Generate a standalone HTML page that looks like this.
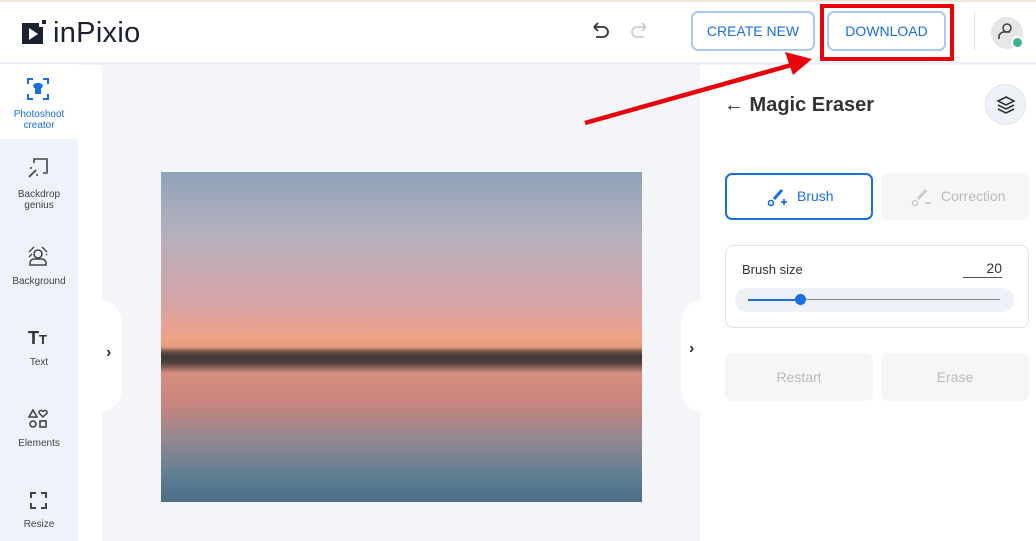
<!DOCTYPE html><html><head><style>
*{margin:0;padding:0;box-sizing:border-box}
body{width:1036px;height:541px;overflow:hidden;font-family:"Liberation Sans",sans-serif;background:#fff;position:relative}
.a{position:absolute}
.side{left:0;top:64px;width:78px;height:477px;background:#eef2fa}
.it{position:absolute;left:0;width:78px;text-align:center;font-size:10px;color:#444;line-height:11px}
.btn{position:absolute;border:2px solid #a9c9f5;border-radius:7px;color:#1a6fe0;font-size:14px;text-align:center;line-height:36px}
</style></head><body>
<div class="a" style="left:0;top:0;width:1036px;height:2px;background:#efe6d6"></div>
<div class="a" style="left:0;top:62px;width:1036px;height:3px;background:#eef2f8"></div>
<svg class="a" style="left:22px;top:20px" width="26" height="26" viewBox="0 0 26 26"><path d="M0 3h17v4h4v17H0z" fill="#1c2033"/><rect x="20" y="0" width="4" height="4" fill="#1c2033"/><path d="M7 8l9 6-9 6z" fill="#fff"/></svg>
<div class="a" style="left:53px;top:17px;font-size:29px;color:#1c2033;letter-spacing:0.3px">inPixio</div>
<svg class="a" style="left:590px;top:22px" width="60" height="18" viewBox="0 0 60 18"><path d="M4 5h9a5 5 0 010 10H6M4 5l4-4M4 5l4 4" stroke="#333" stroke-width="1.8" fill="none"/><path d="M56 5h-9a5 5 0 000 10h7M56 5l-4-4M56 5l-4 4" stroke="#ccc" stroke-width="1.8" fill="none"/></svg>
<div class="btn" style="left:691px;top:11px;width:124px;height:40px">CREATE NEW</div>
<div class="btn" style="left:827px;top:11px;width:119px;height:40px">DOWNLOAD</div>
<div class="a" style="left:820px;top:4px;width:134px;height:57px;border:4px solid #e8000b"></div>
<div class="a" style="left:974px;top:12px;width:1px;height:38px;background:#e3e3e3"></div>
<div class="a" style="left:991px;top:17px;width:32px;height:32px;border-radius:50%;background:#e6e6e6"></div>
<svg class="a" style="left:998px;top:23px" width="20" height="18" viewBox="0 0 20 18"><circle cx="9" cy="5" r="4" stroke="#444" stroke-width="1.6" fill="none"/><path d="M1 16v-2a5 5 0 015-5h6" stroke="#444" stroke-width="1.6" fill="none"/></svg>
<div class="a" style="left:1011px;top:36px;width:13px;height:13px;border-radius:50%;background:#3cb38e;border:2px solid #fff"></div>
<div class="a side"></div>
<div class="a" style="left:0;top:64px;width:78px;height:75px;background:#fff"></div>
<svg class="a" style="left:27px;top:78px" width="22" height="22" viewBox="0 0 22 22"><path d="M1 6V1h5M16 1h5v5M21 16v5h-5M6 21H1v-5" stroke="#1a6fe0" stroke-width="2" fill="none"/><path d="M6 7l3-2h4l3 2-1 3h-1v6H8v-6H7z" fill="#1a6fe0"/></svg>
<div class="it" style="top:109px;color:#1a6fe0">Photoshoot<br>creator</div>
<svg class="a" style="left:27px;top:157px" width="22" height="22" viewBox="0 0 22 22"><path d="M7 6V2h13v14h-4" stroke="#444" stroke-width="1.6" fill="none"/><path d="M2 20l7-7" stroke="#444" stroke-width="1.8"/><circle cx="4" cy="11" r="1" fill="#444"/><circle cx="10" cy="18" r="1" fill="#444"/></svg>
<div class="it" style="top:189px">Backdrop<br>genius</div>
<svg class="a" style="left:27px;top:245px" width="22" height="22" viewBox="0 0 22 22"><circle cx="11" cy="9" r="4" stroke="#444" stroke-width="1.6" fill="none"/><path d="M3 20v-2a4 4 0 014-4h8a4 4 0 014 4v2z" stroke="#444" stroke-width="1.6" fill="none"/><path d="M2 7l5-5M15 2l5 5M2 12l3-3M19 10l1-1" stroke="#444" stroke-width="1.4"/></svg>
<div class="it" style="top:276px">Background</div>
<div class="a" style="left:28px;top:328px;font-size:18px;font-weight:bold;color:#333">T<span style="font-size:13px">T</span></div>
<div class="it" style="top:357px">Text</div>
<svg class="a" style="left:28px;top:409px" width="20" height="20" viewBox="0 0 20 20"><path d="M5 1l4 7H1z" stroke="#444" stroke-width="1.6" fill="none"/><path d="M15 8l-4-4a2 2 0 014-1 2 2 0 014 1z" stroke="#444" stroke-width="1.5" fill="none"/><circle cx="5" cy="15" r="3" stroke="#444" stroke-width="1.6" fill="none"/><rect x="12" y="12" width="6" height="6" stroke="#444" stroke-width="1.6" fill="none"/></svg>
<div class="it" style="top:438px">Elements</div>
<div class="a" style="left:30px;top:492px;width:17px;height:17px;border:2px dashed #444"></div>
<div class="it" style="top:519px">Resize</div>
<div class="a" style="left:78px;top:65px;width:24px;height:476px;background:#fff"></div>
<div class="a" style="left:102px;top:65px;width:598px;height:476px;background:#f4f5f8"></div>
<div class="a" style="left:78px;top:300px;width:44px;height:112px;background:#fff;border-radius:0 22px 22px 0"></div>
<div class="a" style="left:681px;top:300px;width:40px;height:112px;background:#fff;border-radius:22px 0 0 22px"></div>
<div class="a" style="left:106px;top:344px;font-size:16px;color:#333;font-weight:bold">›</div>
<div class="a" style="left:689px;top:340px;font-size:16px;color:#333;font-weight:bold">›</div>
<div class="a" style="left:161px;top:172px;width:481px;height:330px;background:linear-gradient(180deg,#8fa4ba 0%,#b7b0bc 20%,#d6a3a5 40%,#f0a283 51%,#e59a80 53%,#6a5048 54.5%,#3f3634 56%,#5a4440 58%,#d58f7f 61%,#c8857d 70%,#8f8792 82%,#5f7f93 92%,#4b6e86 100%)"></div>
<div class="a" style="left:700px;top:65px;width:336px;height:476px;background:#fff"></div>
<div class="a" style="left:724px;top:94px;font-size:20px;font-weight:bold;color:#333">← Magic Eraser</div>
<div class="a" style="left:985px;top:84px;width:41px;height:41px;border-radius:50%;background:#eef1f8;border:1px solid #e2e4ea"></div>
<svg class="a" style="left:995px;top:94px" width="22" height="22" viewBox="0 0 22 22"><path d="M11 3l8 4-8 4-8-4z M3 11l8 4 8-4M3 15l8 4 8-4" stroke="#333" stroke-width="1.6" fill="none"/></svg>
<div class="a" style="left:725px;top:173px;width:148px;height:47px;border:2px solid #1a6fe0;border-radius:7px;color:#1a6fe0;font-size:14px;line-height:43px;padding-left:70px">Brush</div>
<svg class="a" style="left:766px;top:187px" width="22" height="20" viewBox="0 0 22 20"><path d="M8 12L16 3" stroke="#1a6fe0" stroke-width="3"/><circle cx="5" cy="16" r="2.5" stroke="#1a6fe0" stroke-width="1.6" fill="none"/><path d="M15 15h6M18 12v6" stroke="#1a6fe0" stroke-width="1.8"/></svg>
<div class="a" style="left:881px;top:173px;width:148px;height:47px;background:#f6f6f6;border-radius:7px;color:#bbb;font-size:14px;line-height:47px;padding-left:60px">Correction</div>
<svg class="a" style="left:910px;top:187px" width="22" height="20" viewBox="0 0 22 20"><path d="M8 12L16 3" stroke="#ccc" stroke-width="3"/><circle cx="5" cy="16" r="2.5" stroke="#ccc" stroke-width="1.6" fill="none"/><path d="M15 16h6" stroke="#ccc" stroke-width="1.8"/></svg>
<div class="a" style="left:725px;top:245px;width:304px;height:83px;border:1px solid #e2e4e8;border-radius:8px"></div>
<div class="a" style="left:742px;top:262px;font-size:13px;color:#333">Brush size</div>
<div class="a" style="left:963px;top:260px;width:39px;text-align:right;font-size:14px;color:#333;border-bottom:1px solid #555;padding-bottom:1px">20</div>
<div class="a" style="left:735px;top:288px;width:279px;height:24px;background:#eef1f7;border-radius:12px"></div>
<div class="a" style="left:748px;top:299px;width:53px;height:2px;background:#1a6fe0"></div>
<div class="a" style="left:801px;top:299px;width:199px;height:1px;background:#888"></div>
<div class="a" style="left:795px;top:294px;width:11px;height:11px;border-radius:50%;background:#1a6fe0"></div>
<div class="a" style="left:725px;top:353px;width:148px;height:48px;background:#f6f6f6;border-radius:7px;color:#bbb;font-size:14px;line-height:48px;text-align:center">Restart</div>
<div class="a" style="left:881px;top:353px;width:148px;height:48px;background:#f6f6f6;border-radius:7px;color:#bbb;font-size:14px;line-height:48px;text-align:center">Erase</div>
<svg class="a" style="left:0;top:0" width="1036" height="541"><path d="M585 123L795 64" stroke="#e8000b" stroke-width="4.5"/><path d="M812 59L785 52L793 75z" fill="#e8000b"/></svg>
</body></html>
